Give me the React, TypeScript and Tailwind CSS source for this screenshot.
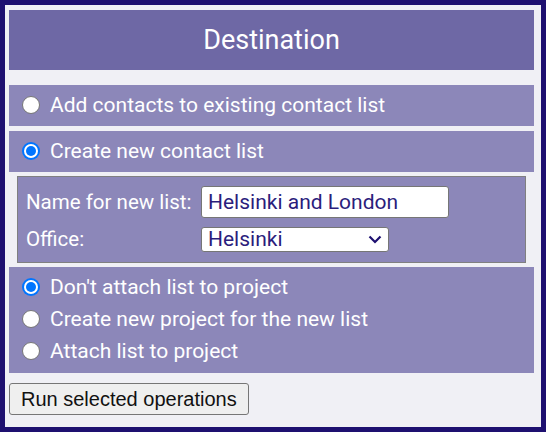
import React, { useState } from "react";

function Radio({ checked, onClick }: { checked?: boolean; onClick?: () => void }) {
  return (
    <span
      onClick={onClick}
      className={
        checked
          ? "relative -top-[1px] flex h-[18px] w-[18px] shrink-0 items-center justify-center rounded-full bg-[#0075ff]"
          : "relative -top-[1px] block h-[18px] w-[18px] shrink-0 rounded-full border border-[#767676] bg-white"
      }
    >
      {checked ? (
        <span className="flex h-[14px] w-[14px] items-center justify-center rounded-full bg-white">
          <span className="block h-[10px] w-[10px] rounded-full bg-[#0075ff]" />
        </span>
      ) : null}
    </span>
  );
}

export default function App() {
  const [dest, setDest] = useState(1);
  const [proj, setProj] = useState(0);
  return (
    <div
      className="h-[432px] w-[546px] border-[5px] border-[#1e1070] bg-[#f0f0f5] pl-[4px] pr-[7px] pt-[5px] text-white"
      style={{ fontFamily: "Roboto, 'Noto Sans', sans-serif" }}
    >
      <div className="flex h-[60px] items-center justify-center bg-[#6e68a5] text-[27px]">
        Destination
      </div>

      <div
        onClick={() => setDest(0)}
        className="mt-[15px] flex h-[41px] items-center gap-[10px] bg-[#8c87b9] pl-[13px] text-[21px]"
      >
        <Radio checked={dest === 0} />
        <span>Add contacts to existing contact list</span>
      </div>

      <div
        onClick={() => setDest(1)}
        className="mt-[5px] flex h-[41px] items-center gap-[10px] bg-[#8c87b9] pl-[13px] text-[21px]"
      >
        <Radio checked={dest === 1} />
        <span>Create new contact list</span>
      </div>

      <div className="mx-[8px] mt-[4px] border border-[#808080] bg-[#8c87b9] pb-[10px] pl-[8px] pt-[9px] text-[20.5px] leading-none">
        <div className="grid grid-cols-[175px_1fr] items-center gap-y-[9px]">
          <span>Name for new list:</span>
          <input
            type="text"
            defaultValue="Helsinki and London"
            className="h-[32px] w-[248px] rounded-[3px] border border-[#767676] bg-white px-[6px] text-[21px] text-[#2b1d7c] outline-none"
            style={{ fontFamily: "Roboto, 'Noto Sans', sans-serif" }}
          />
          <span>Office:</span>
          <div className="flex h-[25px] w-[188px] items-center justify-between rounded-[3px] border border-[#767676] bg-white pl-[6px] pr-[6px] text-[21px] text-[#2b1d7c]">
            <span>Helsinki</span>
            <svg width="14" height="9" viewBox="0 0 14 9" fill="none">
              <path d="M1.5 1.5 L7 7 L12.5 1.5" stroke="#1e1070" strokeWidth="2.2" />
            </svg>
          </div>
        </div>
      </div>

      <div className="mt-[4px] bg-[#8c87b9] py-[5px] pl-[13px] text-[21px]">
        {["Don't attach list to project", "Create new project for the new list", "Attach list to project"].map(
          (t, i) => (
            <div key={t} onClick={() => setProj(i)} className="flex h-[32px] items-center gap-[10px]">
              <Radio checked={proj === i} />
              <span>{t}</span>
            </div>
          )
        )}
      </div>

      <button
        className="mt-[10px] h-[32px] rounded-[3px] border border-[#767676] bg-[#efefef] px-[11px] text-[20px] text-[#111]"
        style={{ fontFamily: "'Liberation Sans', Arial, sans-serif" }}
      >
        Run selected operations
      </button>
    </div>
  );
}
